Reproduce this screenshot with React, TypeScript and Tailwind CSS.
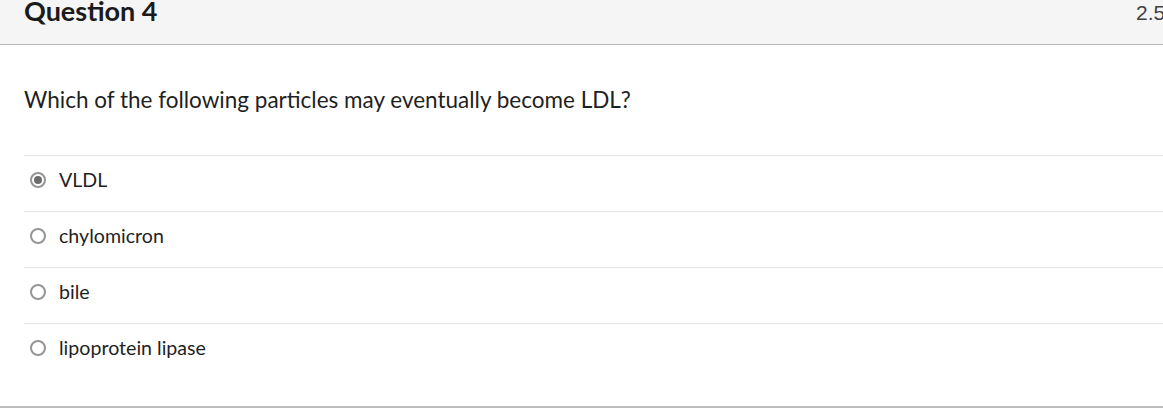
import React from "react";

const options = [
  { label: "VLDL", checked: true },
  { label: "chylomicron", checked: false },
  { label: "bile", checked: false },
  { label: "lipoprotein lipase", checked: false },
];

function Radio({ checked }: { checked: boolean }) {
  return (
    <span className="flex h-[16px] w-[16px] shrink-0 items-center justify-center rounded-full border-2 border-[#959595] bg-white">
      {checked && <span className="h-[8px] w-[8px] rounded-full bg-[#6d6d6d]" />}
    </span>
  );
}

export default function App() {
  return (
    <div className="h-[414px] w-full overflow-hidden bg-white" style={{ fontFamily: "Lato, 'Noto Sans', sans-serif" }}>
      <div className="w-[1200px]">
        <div className="flex h-[45px] items-start justify-between border-b border-[#b9b9b9] bg-[#f5f5f5] pl-6 pr-[1px]">
          <div className="text-[27px] font-bold leading-[21px] text-[#1b1b1b]">Question 4</div>
          <div
            className="mt-[1px] whitespace-nowrap text-[21px] leading-[24px] text-[#3f3f3f]"
            style={{ fontFamily: "'Liberation Sans', Arial, sans-serif" }}
          >
            2.5 pts
          </div>
        </div>
        <div className="pl-6 pr-0">
          <div className="pt-[43px] pb-[43px] text-[22.5px] leading-[24px] text-[#1f1f1f]">
            Which of the following particles may eventually become LDL?
          </div>
          <div className="w-[1139px]">
            {options.map((o) => (
              <div key={o.label} className="flex h-[56px] items-center gap-[13px] border-t border-[#e2e2e2] pl-[6px] pb-[7px]">
                <Radio checked={o.checked} />
                <span className="text-[19.6px] text-[#1f1f1f]">{o.label}</span>
              </div>
            ))}
          </div>
        </div>
        <div className="h-[27px]" />
        <div className="h-[2px] w-[1163px] bg-[#bdbdbd]" />
      </div>
    </div>
  );
}
